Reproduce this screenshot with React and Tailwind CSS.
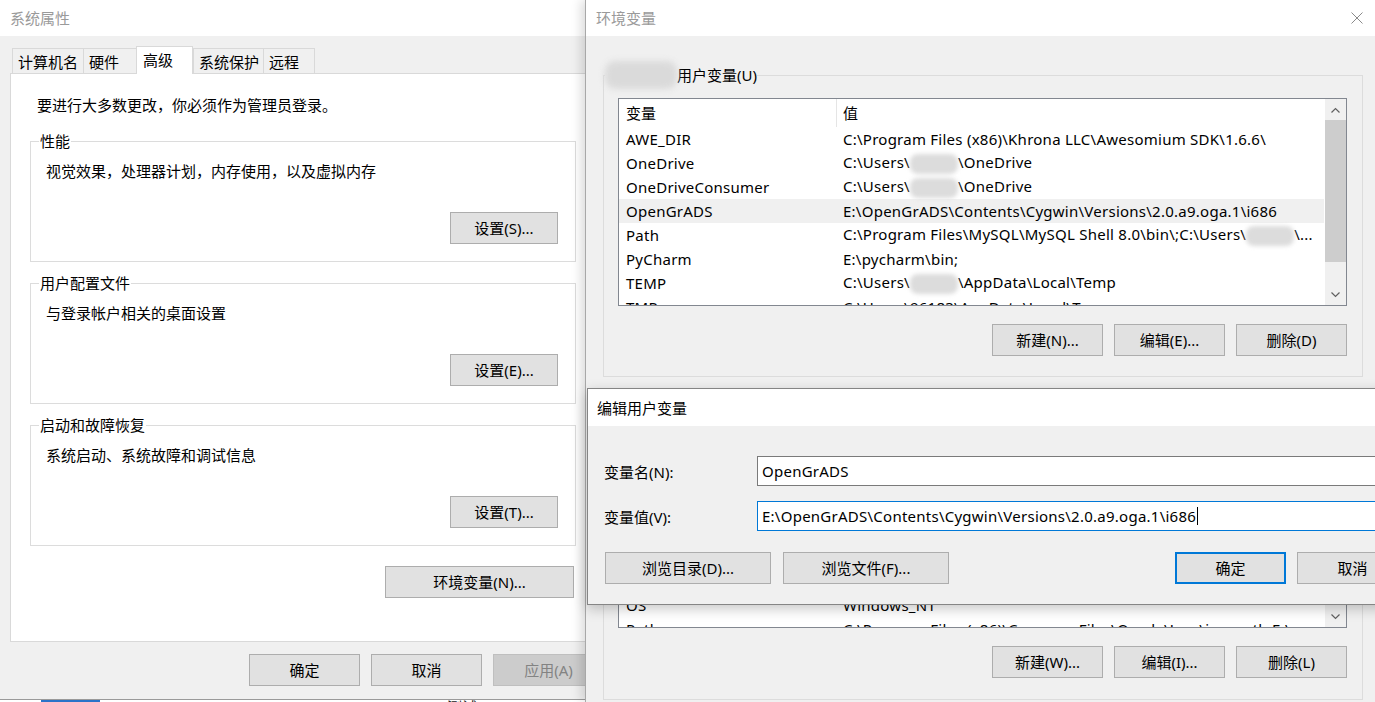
import clsx from 'clsx'

const btnStyles = {
  normal: "bg-[#e1e1e1] border border-[#adadad] text-black",
  primary: "bg-[#e1e1e1] border-2 border-[#0078d7] text-black",
  disabled: "bg-[#cccccc] border border-[#bfbfbf] text-[#838383]",
}

function Button({ children, className, variant = "normal" }) {
  return (
    <div className={clsx("flex shrink-0 items-center justify-center h-[32px]", btnStyles[variant], className)}>
      {children}
    </div>
  )
}

function Blob() {
  return <span className="inline-block w-[48px] h-[20px] align-middle rounded-[8px] bg-[#dcdcdc] blur-[2px]" />
}

const userVars = [
  { name: "AWE_DIR", value: ["C:\\Program Files (x86)\\Khrona LLC\\Awesomium SDK\\1.6.6\\"] },
  { name: "OneDrive", value: ["C:\\Users\\", null, "\\OneDrive"] },
  { name: "OneDriveConsumer", value: ["C:\\Users\\", null, "\\OneDrive"] },
  { name: "OpenGrADS", value: ["E:\\OpenGrADS\\Contents\\Cygwin\\Versions\\2.0.a9.oga.1\\i686"] },
  { name: "Path", value: ["C:\\Program Files\\MySQL\\MySQL Shell 8.0\\bin\\;C:\\Users\\", null, "\\..."] },
  { name: "PyCharm", value: ["E:\\pycharm\\bin;"] },
  { name: "TEMP", value: ["C:\\Users\\", null, "\\AppData\\Local\\Temp"] },
  { name: "TMP", value: ["C:\\Users\\96183\\AppData\\Local\\Temp"] },
]

const sysVars = [
  { name: "ComSpec", value: ["C:\\Windows\\system32\\cmd.exe"] },
  { name: "configsetroot", value: ["C:\\Windows\\ConfigSetRoot"] },
  { name: "DriverData", value: ["C:\\Windows\\System32\\Drivers\\DriverData"] },
  { name: "JAVA_HOME", value: ["C:\\Program Files\\Java\\jdk1.8.0_201"] },
  { name: "NUMBER_OF_PROCESSORS", value: ["8"] },
  { name: "OnlineServices", value: ["Online Services"] },
  { name: "OS", value: ["Windows_NT"] },
  { name: "Path", value: ["C:\\Program Files (x86)\\Common Files\\Oracle\\Java\\javapath;E:\\..."] },
]

function Chevron({ down }) {
  return (
    <svg width="9" height="6" viewBox="0 0 9 6">
      <polyline points={down ? "0.5,0.5 4.5,4.5 8.5,0.5" : "0.5,5.5 4.5,1.5 8.5,5.5"} fill="none" stroke="#606060" strokeWidth="1.2" />
    </svg>
  )
}

function VarList({ rows, highlight }) {
  return (
    <div className="flex h-[208px] w-[729px] border border-[#828790] bg-white overflow-hidden">
      <div className="flex-1 flex flex-col overflow-hidden">
        <div className="flex h-[28px] shrink-0">
          <div className="w-[218px] flex items-center pl-[7px] border-r border-[#e5e5e5]">变量</div>
          <div className="flex items-center pl-[6px]">值</div>
        </div>
        {rows.map((r) => (
          <div key={r.name} className={clsx("flex h-[24px] shrink-0 items-center whitespace-nowrap tracking-[0.25px]", r.name === highlight && "bg-[#f0f0f0]")}>
            <div className="w-[218px] shrink-0 pl-[7px]">{r.name}</div>
            <div className="pl-[6px]">
              {r.value.map((p, i) => (p === null ? <Blob key={i} /> : <span key={i}>{p}</span>))}
            </div>
          </div>
        ))}
      </div>
      <div className="w-[21px] ml-[1px] flex flex-col bg-[#f0f0f0]">
        <div className="h-[21px] flex items-center justify-center"><Chevron /></div>
        <div className="h-[142px] bg-[#cdcdcd]" />
        <div className="flex-1" />
        <div className="h-[21px] flex items-center justify-center"><Chevron down /></div>
      </div>
    </div>
  )
}

function Group({ title, text, button }) {
  return (
    <fieldset className="h-[131px] border border-[#dcdcdc]">
      <legend className="ml-[8px] px-[1px]">{title}</legend>
      <div className="flex flex-col h-[110px] pl-[15px] pr-[17px] pt-[10px]">
        <div>{text}</div>
        <Button className="mt-auto mb-[17px] self-end w-[108px]">{button}</Button>
      </div>
    </fieldset>
  )
}

const tabs = [
  { label: "计算机名", w: "w-[71px]" },
  { label: "硬件", w: "w-[53px]" },
  { label: "高级", w: "w-[57px]", active: true },
  { label: "系统保护", w: "w-[70px]" },
  { label: "远程", w: "w-[52px]" },
]

function SystemProperties() {
  return (
    <div className="absolute left-0 top-0 w-[614px] h-[700px] flex flex-col bg-[#f0f0f0] border-b border-[#9a9a9a]">
      <div className="h-[36px] shrink-0 bg-white flex items-center pl-[10px] text-[#9a9a9a]">系统属性</div>
      <div className="flex flex-col pt-[10px]">
        <div className="flex items-end h-[27px] pl-[12px]">
          {tabs.map((t) =>
            t.active ? (
              <div key={t.label} className={clsx("relative z-10 -mb-px h-[28px] bg-white border-x border-t border-[#d9d9d9] pl-[6px] pt-[3px]", t.w)}>
                {t.label}
              </div>
            ) : (
              <div key={t.label} className={clsx("h-[25px] border-l border-t border-[#d9d9d9] pl-[5px] pt-[3px] last:border-r", t.w)}>
                {t.label}
              </div>
            )
          )}
        </div>
        <div className="ml-[10px] w-[587px] h-[569px] bg-white border border-[#d9d9d9] pl-[19px] pr-[20px] pt-[21px] flex flex-col">
          <div className="pl-[7px]">要进行大多数更改，你必须作为管理员登录。</div>
          <div className="mt-[16px] flex flex-col gap-[11px]">
            <Group title="性能" text="视觉效果，处理器计划，内存使用，以及虚拟内存" button="设置(S)..." />
            <Group title="用户配置文件" text="与登录帐户相关的桌面设置" button="设置(E)..." />
            <Group title="启动和故障恢复" text="系统启动、系统故障和调试信息" button="设置(T)..." />
          </div>
          <Button className="mt-[20px] self-end mr-[2px] w-[189px]">环境变量(N)...</Button>
        </div>
        <div className="flex justify-end gap-[11px] pr-[10px] mt-[12px]">
          <Button className="w-[111px]">确定</Button>
          <Button className="w-[111px]">取消</Button>
          <Button className="w-[111px]" variant="disabled">应用(A)</Button>
        </div>
      </div>
    </div>
  )
}

function EnvironmentVariables() {
  return (
    <div className="absolute left-[585px] top-0 w-[800px] h-[702px] flex flex-col bg-[#f0f0f0] border-l border-[#a8a8a8] shadow-[-4px_0_10px_rgba(0,0,0,0.14)]">
      <div className="h-[36px] shrink-0 bg-white flex items-center justify-between pl-[10px] pr-[22px] text-[#9a9a9a]">
        <span>环境变量</span>
        <svg width="12" height="12" viewBox="0 0 12 12">
          <path d="M0.5 0.5 L11.5 11.5 M11.5 0.5 L0.5 11.5" stroke="#8a8a8a" strokeWidth="1" />
        </svg>
      </div>
      <div className="flex flex-col pl-[17px] pt-[29px]">
        <fieldset className="w-[760px] h-[312px] border border-[#dcdcdc]">
          <legend className="ml-[1px] h-[20px] flex items-center">
            <span className="inline-block w-[72px] h-[28px] -my-[4px] rounded-[10px] bg-[#dadada] blur-[3px]" />
            <span>用户变量(U)</span>
          </legend>
          <div className="pl-[14px] pt-[13px] flex flex-col">
            <VarList rows={userVars} highlight="OpenGrADS" />
            <div className="w-[729px] mt-[18px] flex justify-end gap-[11px]">
              <Button className="w-[111px]">新建(N)...</Button>
              <Button className="w-[111px]">编辑(E)...</Button>
              <Button className="w-[111px]">删除(D)</Button>
            </div>
          </div>
        </fieldset>
        <fieldset className="mt-[10px] w-[760px] h-[313px] border border-[#dcdcdc]">
          <legend className="ml-[1px]">系统变量(S)</legend>
          <div className="pl-[14px] pt-[13px] flex flex-col">
            <VarList rows={sysVars} />
            <div className="w-[729px] mt-[18px] flex justify-end gap-[11px]">
              <Button className="w-[111px]">新建(W)...</Button>
              <Button className="w-[111px]">编辑(I)...</Button>
              <Button className="w-[111px]">删除(L)</Button>
            </div>
          </div>
        </fieldset>
      </div>
    </div>
  )
}

function EditDialog() {
  return (
    <div className="absolute left-[587px] top-[388px] w-[840px] h-[217px] flex flex-col bg-[#f0f0f0] border border-[#858585] shadow-[0_4px_12px_rgba(0,0,0,0.22)]">
      <div className="h-[37px] shrink-0 bg-white flex items-center pl-[9px]">编辑用户变量</div>
      <div className="flex flex-col pl-[16px] pr-[16px] pt-[30px]">
        <div className="flex items-center">
          <div className="w-[153px] pt-[2px]">变量名(N):</div>
          <div className="flex-1 h-[30px] bg-white border border-[#7a7a7a] flex items-center pl-[4px] tracking-[0.25px]">OpenGrADS</div>
        </div>
        <div className="flex items-center mt-[15px]">
          <div className="w-[153px] pt-[2px]">变量值(V):</div>
          <div className="flex-1 h-[30px] bg-white border border-[#0078d7] flex items-center pl-[4px] tracking-[0.25px]">
            <span>E:\OpenGrADS\Contents\Cygwin\Versions\2.0.a9.oga.1\i686</span>
            <span className="ml-[1px] w-px h-[18px] bg-black" />
          </div>
        </div>
        <div className="flex mt-[21px] pl-px">
          <Button className="w-[166px]">浏览目录(D)...</Button>
          <Button className="w-[166px] ml-[12px]">浏览文件(F)...</Button>
          <Button className="w-[111px] ml-[226px]" variant="primary">确定</Button>
          <Button className="w-[111px] ml-[11px]">取消</Button>
        </div>
      </div>
    </div>
  )
}

export default function App() {
  return (
    <div className="relative w-[1375px] h-[702px] overflow-hidden bg-white text-black text-[15px] leading-[20px] font-['Noto_Sans','Noto_Sans_CJK_SC',sans-serif]">
      <div className="absolute left-[41px] top-[698px] w-[59px] h-[6px] bg-[#2a73c9]" />
      <div className="absolute left-[379px] top-[697px] text-[#222]">Windows 测试</div>
      <SystemProperties />
      <EnvironmentVariables />
      <EditDialog />
    </div>
  )
}
